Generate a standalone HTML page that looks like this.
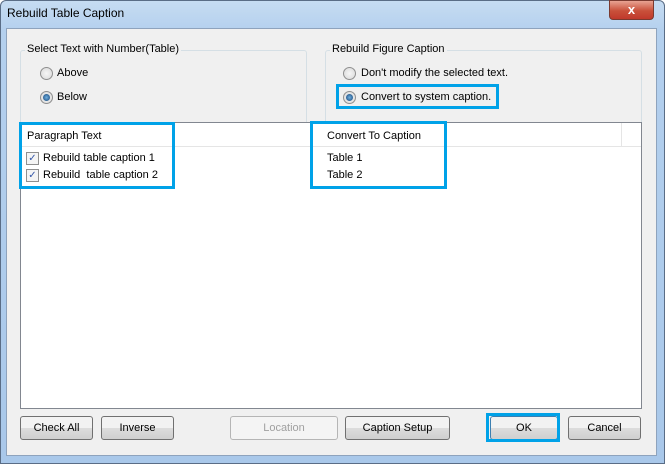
<!DOCTYPE html><html><head><style>
body{margin:0;width:665px;height:464px;overflow:hidden;background:#fff;font-family:"Liberation Sans",sans-serif;font-size:11px;line-height:15px;color:#000}
.win{position:absolute;left:0;top:0;width:663px;height:462px;border-radius:6px 6px 0 0;background:linear-gradient(#c6dcf2,#b4d0ee 30px,#a9c8ea);border:1px solid #5a6d86}
.client{position:absolute;left:6px;top:28px;width:649px;height:426px;background:#f0f0f0;border:1px solid #8ea3bd}
.title{position:absolute;left:7px;top:6px;font-size:12px}
.close{position:absolute;left:609px;top:0;width:43px;height:18px;border-radius:0 0 4px 4px;background:linear-gradient(#e8a393,#c9503a 55%,#c0392b);border:1px solid #7a3a30;color:#fff;font-weight:bold;text-align:center;line-height:17px;font-size:13px}
.a{position:absolute}
.grp{position:absolute;border:1px solid #d5dfe5;border-radius:3px}
.lbl{position:absolute;background:#f0f0f0;padding:0 2px}
.radio{position:absolute;width:11px;height:11px;border-radius:50%;border:1px solid #8f8f8f;background:radial-gradient(#f6f6f6,#d8d8d8)}
.radio.on::after{content:"";position:absolute;left:2px;top:2px;width:7px;height:7px;border-radius:50%;background:radial-gradient(#6fb0e0,#123f73)}
.list{position:absolute;left:20px;top:122px;width:620px;height:285px;background:#fff;border:1px solid #828790}
.cb{position:absolute;width:11px;height:11px;border:1px solid #8f8f8f;background:#f4f4f4;color:#3657a8;font-size:10px;line-height:11px;text-align:center}
.btn{position:absolute;top:416px;height:22px;border:1px solid #707070;border-radius:3px;background:linear-gradient(#f2f2f2 50%,#dddddd 50%,#cfcfcf);text-align:center;line-height:22px}
.hl{position:absolute;border:3px solid #00a2e8;box-sizing:border-box}
</style></head><body>
<div class="win"></div>
<div class="title">Rebuild Table Caption</div>
<div class="close">x</div>
<div class="client"></div>
<div class="grp" style="left:20px;top:50px;width:285px;height:93px"></div>
<div class="lbl" style="left:25px;top:42px">Select Text with Number(Table)</div>
<div class="radio" style="left:40px;top:67px"></div><div class="a" style="left:57px;top:66px">Above</div>
<div class="radio on" style="left:40px;top:91px"></div><div class="a" style="left:57px;top:90px">Below</div>
<div class="grp" style="left:325px;top:50px;width:315px;height:93px"></div>
<div class="lbl" style="left:330px;top:42px">Rebuild Figure Caption</div>
<div class="radio" style="left:343px;top:67px"></div><div class="a" style="left:361px;top:66px">Don't modify the selected text.</div>
<div class="radio on" style="left:343px;top:91px"></div><div class="a" style="left:361px;top:90px">Convert to system caption.</div>
<div class="list">
<div class="a" style="left:0;top:0;width:620px;height:23px;border-bottom:1px solid #e5e5e5"></div>
<div class="a" style="left:289px;top:0;width:1px;height:23px;background:#e5e5e5"></div>
<div class="a" style="left:600px;top:0;width:1px;height:23px;background:#e5e5e5"></div>
<div class="a" style="left:6px;top:6px">Paragraph Text</div>
<div class="a" style="left:306px;top:6px">Convert To Caption</div>
<div class="cb" style="left:5px;top:29px">✓</div><div class="a" style="left:22px;top:28px">Rebuild table caption 1</div>
<div class="cb" style="left:5px;top:46px">✓</div><div class="a" style="left:22px;top:45px">Rebuild&nbsp; table caption 2</div>
<div class="a" style="left:306px;top:28px">Table 1</div>
<div class="a" style="left:306px;top:45px">Table 2</div>
</div>
<div class="btn" style="left:20px;width:71px">Check All</div>
<div class="btn" style="left:101px;width:71px">Inverse</div>
<div class="btn" style="left:230px;width:106px;color:#a0a0a0;border-color:#b5b5b5;background:#f4f4f4">Location</div>
<div class="btn" style="left:345px;width:103px">Caption Setup</div>
<div class="btn" style="left:490px;width:66px;border-color:#3c7fb1">OK</div>
<div class="btn" style="left:568px;width:71px">Cancel</div>
<div class="hl" style="left:336px;top:84px;width:163px;height:25px"></div>
<div class="hl" style="left:19px;top:122px;width:156px;height:67px"></div>
<div class="hl" style="left:310px;top:121px;width:137px;height:68px"></div>
<div class="hl" style="left:486px;top:413px;width:74px;height:29px"></div>
</body></html>
